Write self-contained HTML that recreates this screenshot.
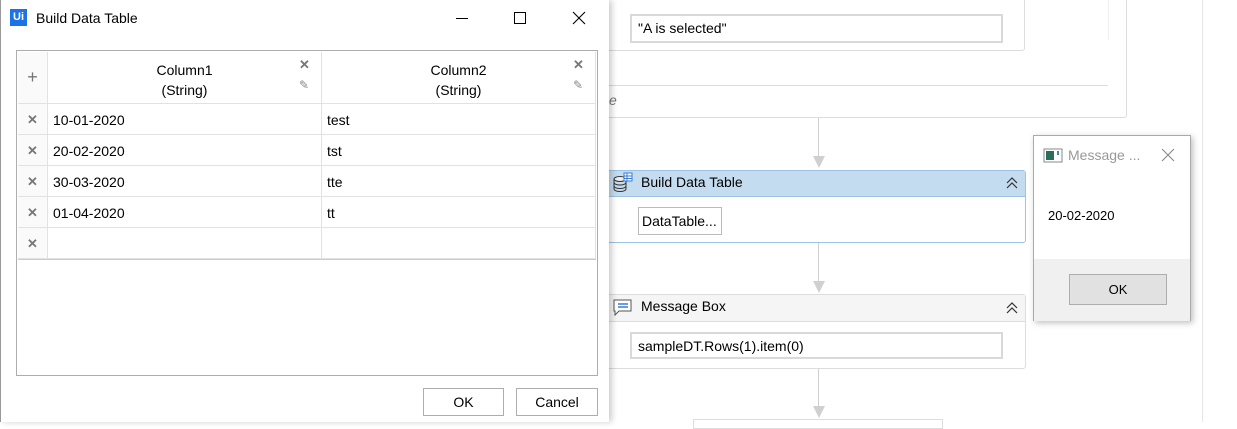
<!DOCTYPE html>
<html><head><style>
*{margin:0;padding:0;box-sizing:border-box}
body{width:1237px;height:422px;overflow:hidden;background:#fff;font-family:"Liberation Sans",sans-serif;font-size:14px;color:#000;position:relative}
.a{position:absolute}
.cell{position:absolute;border-right:1px solid #e2e2e2;border-bottom:1px solid #e2e2e2}
.x{color:#777;font-size:13px;font-weight:bold}
</style></head><body>
<div class="a" style="left:1202px;top:0;width:1px;height:422px;background:#e6e6e6"></div>
<div class="a" style="left:1108px;top:0;width:1px;height:40px;background:#f0f0f0"></div>
<div class="a" style="left:600px;top:-2px;width:527px;height:120px;border:1px solid #ddd;border-radius:3px"></div>
<div class="a" style="left:600px;top:-2px;width:425px;height:53px;border:1px solid #ddd;border-radius:3px"></div>
<div class="a" style="left:630px;top:14px;width:373px;height:29px;border:2px solid #d9d9d9;padding:4px 6px;font-size:14px">"A is selected"</div>
<div class="a" style="left:608px;top:85px;width:500px;height:1px;background:#ddd"></div>
<div class="a" style="left:609px;top:92px;font-style:italic;color:#777">e</div>
<div class="a" style="left:818px;top:118px;width:1px;height:42px;background:#d0d0d0"></div>
<div class="a" style="left:813px;top:156px;border-left:6px solid transparent;border-right:6px solid transparent;border-top:12px solid #d0d0d0"></div>
<div class="a" style="left:818px;top:242px;width:1px;height:42px;background:#d0d0d0"></div>
<div class="a" style="left:813px;top:281px;border-left:6px solid transparent;border-right:6px solid transparent;border-top:12px solid #d0d0d0"></div>
<div class="a" style="left:818px;top:368px;width:1px;height:42px;background:#d0d0d0"></div>
<div class="a" style="left:813px;top:406px;border-left:6px solid transparent;border-right:6px solid transparent;border-top:12px solid #d0d0d0"></div>
<div class="a" style="left:693px;top:419px;width:250px;height:10px;border:1px solid #ddd"></div>
<div class="a" style="left:600px;top:170px;width:426px;height:73px;border:1px solid #9cc3e5;border-radius:3px;background:#fff"></div>
<div class="a" style="left:601px;top:171px;width:424px;height:26px;background:#c4dcf0;border-bottom:1px solid #9cc3e5"></div>
<svg class="a" style="left:612px;top:172px" width="22" height="22" viewBox="0 0 22 22"><ellipse cx="8" cy="7" rx="6" ry="2.5" fill="#eee" stroke="#333"/><path d="M2 7v10c0 1.4 2.7 2.5 6 2.5s6-1.1 6-2.5V7M2 10.5c0 1.4 2.7 2.5 6 2.5s6-1.1 6-2.5M2 14c0 1.4 2.7 2.5 6 2.5s6-1.1 6-2.5" fill="none" stroke="#333"/><rect x="12" y="1" width="8" height="8" fill="#fff" stroke="#3a7bd5"/><path d="M12 4h8M12 6.5h8M15 1v8" stroke="#3a7bd5"/></svg>
<div class="a" style="left:641px;top:174px;font-size:14px">Build Data Table</div>
<svg class="a" style="left:1005px;top:176px" width="14" height="14"><path d="M2 7l5-5 5 5M2 12l5-5 5 5" fill="none" stroke="#333" stroke-width="1.2"/></svg>
<div class="a" style="left:638px;top:207px;width:84px;height:28px;border:1px solid #bbb;padding:5px 3px;font-size:14px">DataTable...</div>
<div class="a" style="left:600px;top:294px;width:426px;height:75px;border:1px solid #ddd;border-radius:3px;background:#fff"></div>
<div class="a" style="left:601px;top:295px;width:424px;height:27px;background:#f5f5f5;border-bottom:1px solid #ddd"></div>
<svg class="a" style="left:613px;top:298px" width="20" height="20" viewBox="0 0 20 20"><path d="M1 2h17v11H6l-4 4v-4H1z" fill="#fff" stroke="#555"/><path d="M5 6h10M5 9h10" stroke="#3a7bd5" stroke-width="1.5"/></svg>
<div class="a" style="left:641px;top:298px;font-size:14px">Message Box</div>
<svg class="a" style="left:1005px;top:301px" width="14" height="14"><path d="M2 7l5-5 5 5M2 12l5-5 5 5" fill="none" stroke="#333" stroke-width="1.2"/></svg>
<div class="a" style="left:630px;top:332px;width:373px;height:27px;border:2px solid #d9d9d9;padding:4px 6px;font-size:14px">sampleDT.Rows(1).item(0)</div>
<div class="a" style="left:1033px;top:135px;width:158px;height:186px;border:1px solid #aaa;background:#fff;box-shadow:2px 2px 6px rgba(0,0,0,.25)">
 <svg class="a" style="left:9px;top:12px" width="20" height="16"><rect x="1" y="1" width="18" height="13" fill="#fff" stroke="#888"/><rect x="3" y="3" width="8" height="9" fill="#2a6e5a"/><rect x="14" y="3" width="2" height="4" fill="#48a"/></svg>
 <div class="a" style="left:34px;top:11px;color:#999;font-size:14px">Message ...</div>
 <svg class="a" style="left:127px;top:12px" width="14" height="14"><path d="M1 1l12 12M13 1L1 13" stroke="#888" stroke-width="1.1"/></svg>
 <div class="a" style="left:14px;top:72px;font-size:13px">20-02-2020</div>
 <div class="a" style="left:0;top:123px;width:156px;height:62px;background:#f0f0f0"></div>
 <div class="a" style="left:35px;top:138px;width:98px;height:31px;border:1px solid #adadad;background:#e1e1e1;text-align:center;line-height:29px;font-size:13px">OK</div>
</div>
<div class="a" style="left:0;top:0;width:609px;height:422px;background:#fff;border-left:1px solid #999;box-shadow:3px 0 6px rgba(0,0,0,.2)">
 <div class="a" style="left:9px;top:9px;width:17px;height:17px;background:#1a73e8;color:#fff;font-size:11px;font-weight:bold;text-align:center;line-height:17px">Ui</div>
 <div class="a" style="left:35px;top:10px;font-size:14px">Build Data Table</div>
 <div class="a" style="left:455px;top:18px;width:12px;height:1px;background:#000"></div>
 <div class="a" style="left:513px;top:12px;width:12px;height:12px;border:1px solid #000"></div>
 <svg class="a" style="left:571px;top:11px" width="14" height="14"><path d="M1 1l12 12M13 1L1 13" stroke="#000" stroke-width="1.1"/></svg>
 <div class="a" style="left:15px;top:50px;width:582px;height:326px;border:1px solid #adadad"></div>
 <div class="a" style="left:17px;top:52px;width:578px;height:208px;border-bottom:1px solid #ccc">
  <div class="cell" style="left:0;top:0;width:30px;height:52px;background:#fafafa;text-align:center;line-height:50px;color:#777;font-size:18px">+</div>
  <div class="cell" style="left:30px;top:0;width:274px;height:52px;text-align:center;padding-top:8px;line-height:20px">Column1<br>(String)</div>
  <div class="cell" style="left:304px;top:0;width:274px;height:52px;text-align:center;padding-top:8px;line-height:20px">Column2<br>(String)</div>
  <div class="a x" style="left:281px;top:5px">✕</div><div class="a" style="left:281px;top:26px;color:#888;font-size:12px">✎</div>
  <div class="a x" style="left:555px;top:5px">✕</div><div class="a" style="left:555px;top:26px;color:#888;font-size:12px">✎</div>
 </div>
 <div class="a" style="left:17px;top:104px;width:578px">
  <div style="position:relative;height:31px"><div class="cell x" style="left:0;width:30px;height:31px;text-align:center;line-height:31px;background:#fafafa">✕</div><div class="cell" style="left:30px;width:274px;height:31px;padding:8px 5px">10-01-2020</div><div class="cell" style="left:304px;width:274px;height:31px;padding:8px 5px">test</div></div>
  <div style="position:relative;height:31px"><div class="cell x" style="left:0;width:30px;height:31px;text-align:center;line-height:31px;background:#fafafa">✕</div><div class="cell" style="left:30px;width:274px;height:31px;padding:8px 5px">20-02-2020</div><div class="cell" style="left:304px;width:274px;height:31px;padding:8px 5px">tst</div></div>
  <div style="position:relative;height:31px"><div class="cell x" style="left:0;width:30px;height:31px;text-align:center;line-height:31px;background:#fafafa">✕</div><div class="cell" style="left:30px;width:274px;height:31px;padding:8px 5px">30-03-2020</div><div class="cell" style="left:304px;width:274px;height:31px;padding:8px 5px">tte</div></div>
  <div style="position:relative;height:31px"><div class="cell x" style="left:0;width:30px;height:31px;text-align:center;line-height:31px;background:#fafafa">✕</div><div class="cell" style="left:30px;width:274px;height:31px;padding:8px 5px">01-04-2020</div><div class="cell" style="left:304px;width:274px;height:31px;padding:8px 5px">tt</div></div>
  <div style="position:relative;height:31px"><div class="cell x" style="left:0;width:30px;height:31px;text-align:center;line-height:31px;background:#fafafa">✕</div><div class="cell" style="left:30px;width:274px;height:31px"></div><div class="cell" style="left:304px;width:274px;height:31px"></div></div>
 </div>
 <div class="a" style="left:422px;top:388px;width:81px;height:28px;border:1px solid #adadad;text-align:center;line-height:26px">OK</div>
 <div class="a" style="left:515px;top:388px;width:82px;height:28px;border:1px solid #adadad;text-align:center;line-height:26px">Cancel</div>
</div>
</body></html>
